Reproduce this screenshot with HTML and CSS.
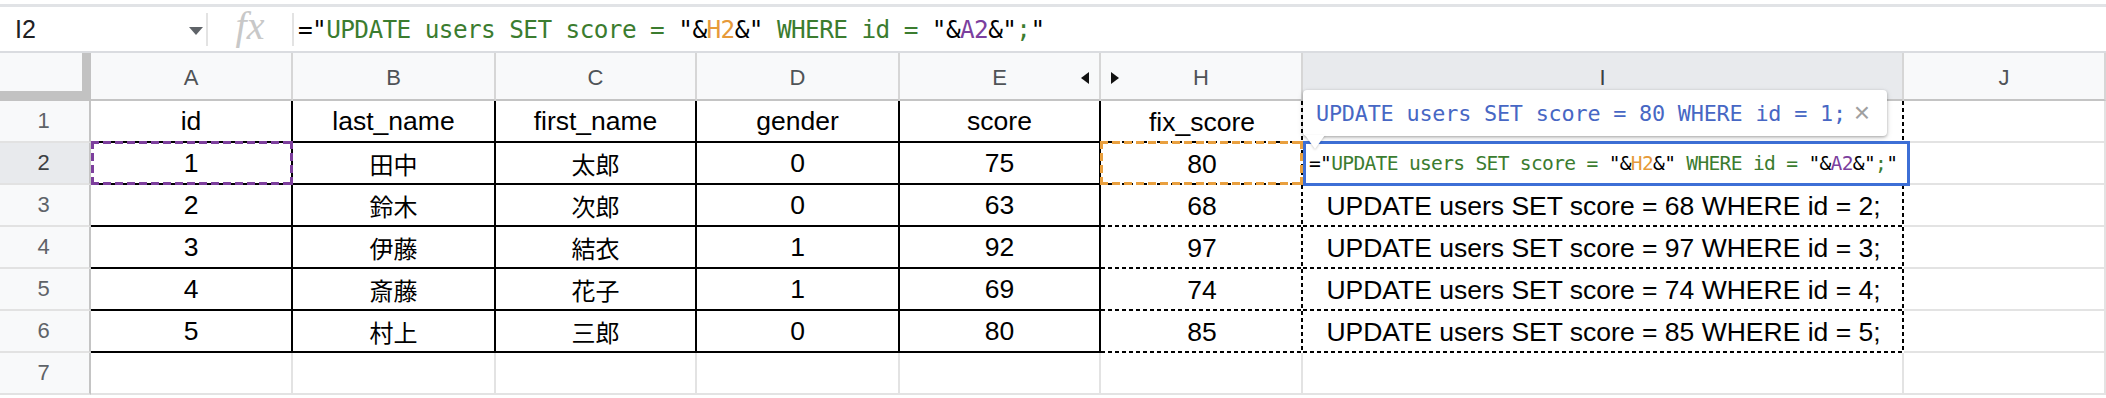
FILE: index.html
```html
<!DOCTYPE html>
<html lang="ja">
<head>
<meta charset="utf-8">
<title>Sheet</title>
<link rel="stylesheet" href="styles.css">
</head>
<body>
<div class="topgap"></div>
<div class="fbar">
  <div class="namebox"><span>I2</span><span class="caret"></span></div>
  <div class="sep"></div>
  <div class="fx">fx</div>
  <div class="sep"></div>
  <div class="formula">="<span class="g">UPDATE users SET score = </span>"&amp;<span class="o">H2</span>&amp;"<span class="g"> WHERE id = </span>"&amp;<span class="p">A2</span>&amp;"<span class="g">;</span>"</div>
</div>
<div class="sheet">
  <!-- header -->
  <div class="corner"></div>
  <div class="ch">A</div>
  <div class="ch">B</div>
  <div class="ch">C</div>
  <div class="ch">D</div>
  <div class="ch">E<span class="tri-l"></span></div>
  <div class="ch"><span class="tri-r"></span>H</div>
  <div class="ch sel">I</div>
  <div class="ch">J</div>

  <!-- row 1 -->
  <div class="rh">1</div>
  <div class="c b">id</div>
  <div class="c b">last_name</div>
  <div class="c b">first_name</div>
  <div class="c b">gender</div>
  <div class="c b">score</div>
  <div class="c dash">fix_score</div>
  <div class="c dash"></div>
  <div class="c"></div>

  <!-- row 2 -->
  <div class="rh sel">2</div>
  <div class="c b marq purple">1</div>
  <div class="c b jp">田中</div>
  <div class="c b jp">太郎</div>
  <div class="c b">0</div>
  <div class="c b">75</div>
  <div class="c dash marq orange">80</div>
  <div class="c dash active">
    <div class="tip"><span class="tip-text">UPDATE users SET score = 80 WHERE id = 1;</span><span class="tip-x">×</span></div>
    <div class="editor">="<span class="g">UPDATE users SET score = </span>"&amp;<span class="o">H2</span>&amp;"<span class="g"> WHERE id = </span>"&amp;<span class="p">A2</span>&amp;"<span class="g">;</span>"</div>
  </div>
  <div class="c"></div>

  <!-- row 3 -->
  <div class="rh">3</div>
  <div class="c b">2</div>
  <div class="c b jp">鈴木</div>
  <div class="c b jp">次郎</div>
  <div class="c b">0</div>
  <div class="c b">63</div>
  <div class="c dash">68</div>
  <div class="c dash">UPDATE users SET score = 68 WHERE id = 2;</div>
  <div class="c"></div>

  <!-- row 4 -->
  <div class="rh">4</div>
  <div class="c b">3</div>
  <div class="c b jp">伊藤</div>
  <div class="c b jp">結衣</div>
  <div class="c b">1</div>
  <div class="c b">92</div>
  <div class="c dash">97</div>
  <div class="c dash">UPDATE users SET score = 97 WHERE id = 3;</div>
  <div class="c"></div>

  <!-- row 5 -->
  <div class="rh">5</div>
  <div class="c b">4</div>
  <div class="c b jp">斎藤</div>
  <div class="c b jp">花子</div>
  <div class="c b">1</div>
  <div class="c b">69</div>
  <div class="c dash">74</div>
  <div class="c dash">UPDATE users SET score = 74 WHERE id = 4;</div>
  <div class="c"></div>

  <!-- row 6 -->
  <div class="rh">6</div>
  <div class="c b">5</div>
  <div class="c b jp">村上</div>
  <div class="c b jp">三郎</div>
  <div class="c b">0</div>
  <div class="c b">80</div>
  <div class="c dash">85</div>
  <div class="c dash">UPDATE users SET score = 85 WHERE id = 5;</div>
  <div class="c"></div>

  <!-- row 7 -->
  <div class="rh">7</div>
  <div class="c"></div>
  <div class="c"></div>
  <div class="c"></div>
  <div class="c"></div>
  <div class="c"></div>
  <div class="c"></div>
  <div class="c"></div>
  <div class="c"></div>
</div>
</body>
</html>
```

FILE: styles.css
```css
* { box-sizing: border-box; }
html, body { margin: 0; padding: 0; background: #fff; }
body {
  width: 2106px;
  height: 398px;
  overflow: hidden;
  font-family: "Liberation Sans", "Noto Sans CJK JP", Arial, sans-serif;
  color: #000;
}

.topgap { height: 4px; }

.fbar {
  display: flex;
  align-items: center;
  height: 49px;
  border-top: 3px solid #e1e3e6;
  border-bottom: 2px solid #dadce0;
}
.namebox {
  width: 206px;
  height: 100%;
  display: flex;
  align-items: center;
  justify-content: space-between;
  padding: 0 3px 0 15px;
  font-family: "Liberation Sans", Arial, sans-serif;
  font-size: 25px;
  color: #202124;
}
.caret {
  width: 0;
  height: 0;
  margin-top: 4px;
  border-left: 7.5px solid transparent;
  border-right: 7.5px solid transparent;
  border-top: 8px solid #5f6368;
}
.sep { width: 2px; height: 33px; background: #e3e3e3; }
.fx {
  width: 84px;
  text-align: center;
  font-family: "Liberation Serif", serif;
  font-style: italic;
  font-size: 40px;
  color: #c8c8c8;
  line-height: 1;
  padding-bottom: 6px;
}
.formula {
  padding-left: 4px;
  font-family: "DejaVu Sans Mono", monospace;
  font-size: 24.4px;
  letter-spacing: -0.6px;
  white-space: pre;
  color: #000;
}
.g { color: #3b7c2f; }
.o { color: #e69a3a; }
.p { color: #7b3f9e; }

.sheet {
  display: grid;
  grid-template-columns: 91px 202px 203px 201px 203px 201px 202px 601px 202px;
  grid-template-rows: 48px repeat(7, 42px);
}

.corner {
  background: #f8f9fa;
  box-shadow: inset -9px -10px 0 #c2c2c2;
}
.ch {
  position: relative;
  background: #f8f9fa;
  border-right: 2px solid #d6d6d6;
  border-bottom: 2px solid #c4c4c4;
  display: flex;
  align-items: center;
  justify-content: center;
  padding-top: 4px;
  font-size: 22px;
  color: #4f5357;
}
.ch.sel { background: #e8eaed; color: #3c4043; }
.tri-l, .tri-r {
  position: absolute;
  top: 50%;
  width: 0;
  height: 0;
  margin-top: -4px;
  border-top: 6px solid transparent;
  border-bottom: 6px solid transparent;
}
.tri-l { right: 10px; border-right: 8px solid #111; }
.tri-r { left: 10px; border-left: 8px solid #111; }

.rh {
  background: #f8f9fa;
  border-right: 2px solid #c4c4c4;
  border-bottom: 2px solid #e2e2e2;
  display: flex;
  align-items: center;
  justify-content: center;
  font-size: 22px;
  color: #5f6368;
  padding-right: 2px;
}
.rh.sel { background: #e8eaed; color: #3c4043; }

.c {
  position: relative;
  border-right: 2px solid #e3e3e3;
  border-bottom: 2px solid #e3e3e3;
  display: flex;
  align-items: center;
  justify-content: center;
  font-size: 26.5px;
  white-space: nowrap;
}
.c.b { border-right-color: #000; border-bottom-color: #000; }
.c.jp { font-size: 24px; }
.c.dash {
  border: none;
  background-image:
    repeating-linear-gradient(90deg, #000 0 4px, transparent 4px 7px),
    repeating-linear-gradient(180deg, #000 0 4px, transparent 4px 7px);
  background-size: 100% 2px, 2px 100%;
  background-position: left bottom, right top;
  background-repeat: no-repeat;
}

.marq::after {
  content: "";
  position: absolute;
  pointer-events: none;
  background-image:
    repeating-linear-gradient(90deg, var(--mc) 0 8px, transparent 8px 12px),
    repeating-linear-gradient(90deg, var(--mc) 0 8px, transparent 8px 12px),
    repeating-linear-gradient(180deg, var(--mc) 0 8px, transparent 8px 12px),
    repeating-linear-gradient(180deg, var(--mc) 0 8px, transparent 8px 12px);
  background-size: 100% 3px, 100% 3px, 3px 100%, 3px 100%;
  background-position: left top, left bottom, left top, right top;
  background-repeat: no-repeat;
}
.marq.purple { --mc: #7d3f9d; }
.marq.purple::after { inset: -2px -2px -2px 0; }
.marq.orange { --mc: #e9a03f; }
.marq.orange::after { inset: -2px 0 0 -1px; }

.active { z-index: 5; }
.editor {
  position: absolute;
  left: 0;
  top: -2px;
  width: 607px;
  height: 45px;
  border: 3px solid #3d6fd6;
  background: #fff;
  display: flex;
  align-items: center;
  padding-left: 3px;
  font-family: "DejaVu Sans Mono", monospace;
  font-size: 19.6px;
  letter-spacing: -0.7px;
  white-space: pre;
  color: #000;
  z-index: 1;
}
.tip {
  position: absolute;
  left: 0;
  top: -53px;
  width: 584px;
  height: 46px;
  background: #fff;
  border-radius: 4px;
  box-shadow: 0 1px 3px rgba(0,0,0,0.28), 0 2px 6px rgba(0,0,0,0.12);
  display: flex;
  align-items: center;
  padding-left: 13px;
  z-index: 2;
}
.tip::after {
  content: "";
  position: absolute;
  left: 2px;
  bottom: -13px;
  width: 0;
  height: 0;
  border-left: 10px solid transparent;
  border-right: 10px solid transparent;
  border-top: 14px solid #fff;
  filter: drop-shadow(0 1px 1px rgba(0,0,0,0.2));
}
.tip-text {
  font-family: "DejaVu Sans Mono", monospace;
  font-size: 21.8px;
  letter-spacing: -0.2px;
  color: #4767c4;
  white-space: pre;
}
.tip-x {
  margin-left: 8px;
  font-family: "Liberation Sans", Arial, sans-serif;
  font-size: 28px;
  color: #a0a0a0;
  line-height: 1;
}
```
